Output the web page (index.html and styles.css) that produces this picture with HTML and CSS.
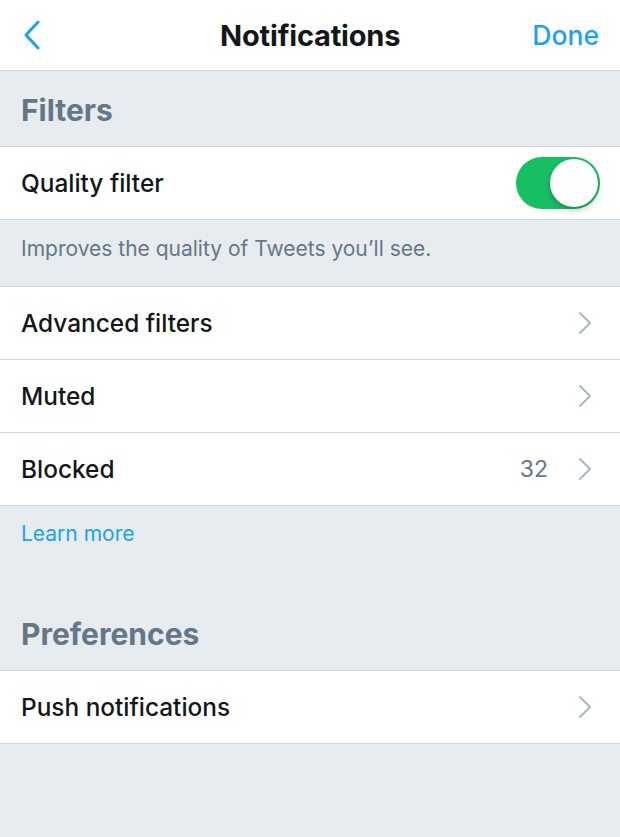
FILE: index.html
```html
<!DOCTYPE html>
<html>
<head>
<meta charset="utf-8">
<link rel="stylesheet" href="styles.css">
</head>
<body>
<div class="app">
  <header class="nav">
    <svg class="back" width="20" height="30" viewBox="0 0 20 30"><path d="M16 2 L4 15 L16 28" fill="none" stroke="#1DA1F2" stroke-width="3" stroke-linecap="round" stroke-linejoin="round"/></svg>
    <div class="title">Notifications</div>
    <div class="done">Done</div>
  </header>
  <div class="section-head">Filters</div>
  <div class="row">
    <span class="label">Quality filter</span>
    <div class="toggle"><div class="knob"></div></div>
  </div>
  <div class="note">Improves the quality of Tweets you’ll see.</div>
  <div class="row">
    <span class="label">Advanced filters</span>
    <svg class="chev" width="14" height="24" viewBox="0 0 14 24"><path d="M2 2 L12 12 L2 22" fill="none" stroke="#AAB8C2" stroke-width="2" stroke-linecap="round" stroke-linejoin="round"/></svg>
  </div>
  <div class="row">
    <span class="label">Muted</span>
    <svg class="chev" width="14" height="24" viewBox="0 0 14 24"><path d="M2 2 L12 12 L2 22" fill="none" stroke="#AAB8C2" stroke-width="2" stroke-linecap="round" stroke-linejoin="round"/></svg>
  </div>
  <div class="row">
    <span class="label">Blocked</span>
    <span class="count">32</span>
    <svg class="chev" width="14" height="24" viewBox="0 0 14 24"><path d="M2 2 L12 12 L2 22" fill="none" stroke="#AAB8C2" stroke-width="2" stroke-linecap="round" stroke-linejoin="round"/></svg>
  </div>
  <div class="learn">Learn more</div>
  <div class="section-head">Preferences</div>
  <div class="row">
    <span class="label">Push notifications</span>
    <svg class="chev" width="14" height="24" viewBox="0 0 14 24"><path d="M2 2 L12 12 L2 22" fill="none" stroke="#AAB8C2" stroke-width="2" stroke-linecap="round" stroke-linejoin="round"/></svg>
  </div>
</div>
</body>
</html>
```
FILE: styles.css
```css
html, body {
  margin: 0;
  padding: 0;
  background: #E6ECF0;
}
body {
  font-family: Inter, "Noto Sans", sans-serif;
  color: #14171A;
}
.app {
  width: 620px;
  min-height: 837px;
  background: #E6ECF0;
}
.nav {
  height: 70px;
  background: #fff;
  border-bottom: 1px solid #CCD6DD;
  display: flex;
  align-items: center;
  padding: 0 21px 0 22px;
}
.back {
  display: block;
}
.title {
  flex: 1;
  text-align: center;
  font-weight: 700;
  font-size: 29px;
  letter-spacing: -0.2px;
  padding-left: 46px;
}
.done {
  color: #1DA1F2;
  font-size: 26.5px;
  font-weight: 500;
}
.section-head {
  display: flex;
  align-items: center;
  padding-left: 21px;
  font-size: 30px;
  font-weight: 700;
  color: #657786;
  border-bottom: 1px solid #CCD6DD;
  box-sizing: border-box;
  height: 76px;
  padding-top: 2px;
}
.row {
  height: 73px;
  box-sizing: border-box;
  background: #fff;
  border-bottom: 1px solid #CCD6DD;
  display: flex;
  align-items: center;
  padding: 0 28px 0 21px;
}
.label {
  flex: 1;
  font-size: 24.4px;
  font-weight: 500;
}
.count {
  font-size: 23px;
  color: #657786;
  margin-right: 30px;
}
.toggle {
  width: 84px;
  height: 52px;
  border-radius: 26px;
  background: #17BF63;
  position: relative;
  margin-right: -8px;
}
.knob {
  position: absolute;
  right: 2px;
  top: 2px;
  width: 48px;
  height: 48px;
  border-radius: 50%;
  background: #fff;
  box-shadow: 0 3px 6px rgba(0,0,0,0.25);
}
.note {
  height: 67px;
  box-sizing: border-box;
  border-bottom: 1px solid #CCD6DD;
  display: flex;
  align-items: center;
  padding: 0 21px 10px 21px;
  font-size: 21px;
  color: #657786;
}
.learn {
  height: 89px;
  box-sizing: border-box;
  padding: 15px 21px 0 21px;
  font-size: 21px;
  color: #1DA1F2;
}
```
